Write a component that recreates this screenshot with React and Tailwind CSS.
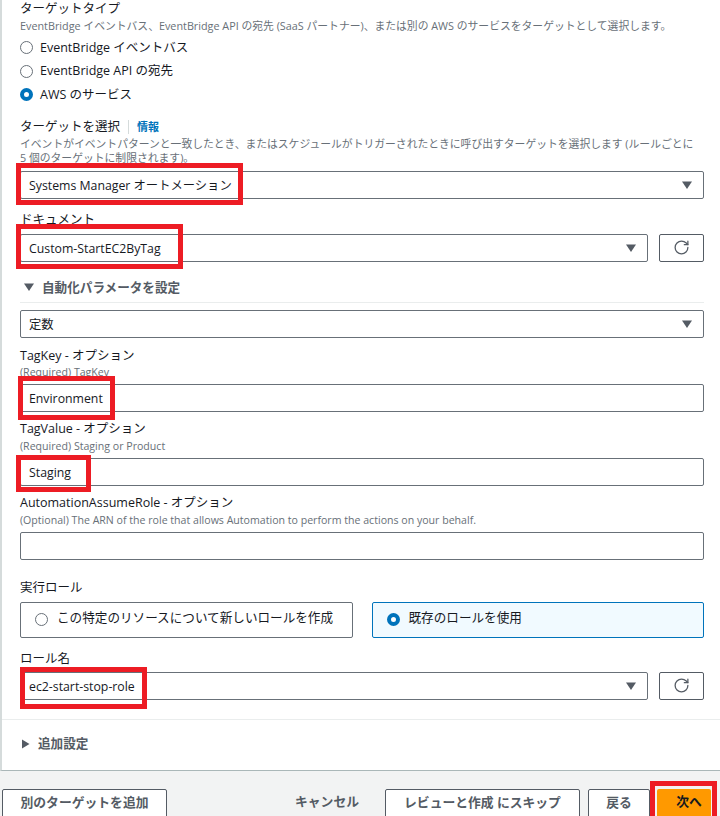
import React from "react";
import { RotateCw } from "lucide-react";

const font = "font-['Open_Sans','Noto_Sans_CJK_JP','Noto_Sans',sans-serif]";

function Caret({ dir = "down", cls = "" }) {
  return (
    <svg width="12" height="10" viewBox="0 0 12 10" className={cls}>
      {dir === "down" ? <path d="M1 1.5h10L6 9z" fill="#545b64" /> : <path d="M2 0.5v9L9.5 5z" fill="#545b64" />}
    </svg>
  );
}

function Radio({ checked }) {
  return checked ? (
    <span className="block w-[13px] h-[13px] shrink-0 rounded-full border-[4px] border-[#0073bb] bg-white" />
  ) : (
    <span className="block w-[13px] h-[13px] shrink-0 rounded-full border border-[#687078] bg-white" />
  );
}

function Label({ children, cls = "" }) {
  return <div className={`pt-[1px] leading-5 text-[12.5px] text-[#16191f] whitespace-nowrap ${cls}`}>{children}</div>;
}

function Desc({ children, cls = "text-[10.6px]" }) {
  return <div className={`h-4 leading-4 text-[#687078] whitespace-nowrap ${cls}`}>{children}</div>;
}

function Box({ children, caret = false, cls = "" }) {
  return (
    <div className={`h-7 flex-1 flex items-center justify-between pl-2 pr-[10px] border border-[#687078] rounded-[2px] bg-white text-[12.3px] text-[#16191f] ${cls}`}>
      <span className="pt-[3px]">{children}</span>
      {caret && <Caret />}
    </div>
  );
}

function Refresh() {
  return (
    <div className="w-[45px] h-7 ml-[11px] shrink-0 flex items-center justify-center border border-[#545b64] rounded-[2px] bg-white">
      <RotateCw size={17} strokeWidth={1.8} color="#545b64" />
    </div>
  );
}

function RadioRow({ checked, children }) {
  return (
    <div className="h-[23.5px] flex items-center gap-[7px] text-[12.5px] text-[#16191f] whitespace-nowrap">
      <Radio checked={checked} />
      <span className="pt-[1px]">{children}</span>
    </div>
  );
}

function Highlight({ cls }) {
  return <div className={`absolute border-[5px] border-[#ed1c24] ${cls}`} />;
}

export default function App() {
  return (
    <div className={`relative w-[720px] h-[816px] overflow-hidden bg-[#f2f3f3] ${font}`}>
      <div className="h-[771px] pl-[18px] pr-[16px] bg-white border-l-2 border-l-[#d5dbdb] border-b border-b-[#aab7b8] box-border">
        <Label cls="h-[18px] !leading-[16px]">ターゲットタイプ</Label>
        <Desc cls="text-[10.8px]">EventBridge イベントバス、EventBridge API の宛先 (SaaS パートナー)、または別の AWS のサービスをターゲットとして選択します。</Desc>
        <div className="mt-[2px]">
          <RadioRow>EventBridge イベントバス</RadioRow>
          <RadioRow>EventBridge API の宛先</RadioRow>
          <RadioRow checked>AWS のサービス</RadioRow>
        </div>

        <Label cls="mt-[10px] h-5 flex items-center">
          <span>ターゲットを選択</span>
          <span className="mx-2 h-[14px] w-px bg-[#d5dbdb]" />
          <span className="text-[11px] font-bold text-[#0073bb]">情報</span>
        </Label>
        <div className="text-[10.8px] leading-[14px] text-[#687078] whitespace-nowrap">
          イベントがイベントパターンと一致したとき、またはスケジュールがトリガーされたときに呼び出すターゲットを選択します (ルールごとに<br />5 個のターゲットに制限されます)。
        </div>
        <div className="mt-[6px] flex"><Box caret>Systems Manager オートメーション</Box></div>

        <Label cls="mt-[10px] h-5">ドキュメント</Label>
        <div className="mt-[5px] flex"><Box caret>Custom-StartEC2ByTag</Box><Refresh /></div>

        <div className="mt-[15px] h-5 flex items-center gap-[7px] pl-[3px] text-[12.6px] font-semibold text-[#545b64] whitespace-nowrap">
          <Caret />
          <span className="pt-[3px]">自動化パラメータを設定</span>
        </div>
        <div className="mt-[5px] h-px bg-[#eaeded]" />
        <div className="mt-[7px] flex"><Box caret>定数</Box></div>

        <Label cls="mt-[7px] h-5">TagKey - オプション</Label>
        <div className="-mt-[1px]"><Desc>(Required) TagKey</Desc></div>
        <div className="mt-[4px] flex"><Box>Environment</Box></div>

        <Label cls="mt-[6px] h-5">TagValue - オプション</Label>
        <Desc>(Required) Staging or Product</Desc>
        <div className="mt-[4px] flex"><Box>Staging</Box></div>

        <Label cls="mt-[6px] h-5">AutomationAssumeRole - オプション</Label>
        <Desc>(Optional) The ARN of the role that allows Automation to perform the actions on your behalf.</Desc>
        <div className="mt-[4px] flex"><Box /></div>

        <Label cls="mt-[17px] h-5">実行ロール</Label>
        <div className="mt-[5px] grid grid-cols-2 gap-[19px]">
          <div className="h-9 flex items-center gap-[9px] pl-[14px] border border-[#687078] rounded-[2px] text-[12.6px] text-[#16191f] whitespace-nowrap">
            <Radio /><span className="-mt-[2px]">この特定のリソースについて新しいロールを作成</span>
          </div>
          <div className="h-9 flex items-center gap-[9px] pl-[14px] border border-[#0073bb] rounded-[2px] bg-[#f1faff] text-[12.6px] text-[#16191f] whitespace-nowrap">
            <Radio checked /><span className="-mt-[2px]">既存のロールを使用</span>
          </div>
        </div>

        <Label cls="mt-[10px] h-5">ロール名</Label>
        <div className="mt-[4px] flex"><Box caret>ec2-start-stop-role</Box><Refresh /></div>
      </div>

      <div className="absolute left-[2px] right-0 top-[719px] h-px bg-[#eaeded]" />
      <div className="absolute left-[21px] top-[734px] h-5 flex items-center gap-[6px] text-[12.6px] font-semibold text-[#545b64] whitespace-nowrap">
        <Caret dir="right" cls="-ml-[1px]" />
        <span>追加設定</span>
      </div>

      <div className="mt-[18px] flex items-start pl-[2px] text-[12.8px] font-semibold text-[#545b64] whitespace-nowrap">
        <div className="w-[165px] h-9 flex justify-center pt-[3px] border border-[#545b64] rounded-[2px] bg-white">別のターゲットを追加</div>
        <div className="ml-[128px] pt-[3px]">キャンセル</div>
        <div className="ml-[26px] w-[195px] h-9 flex justify-center pt-[3px] border border-[#545b64] rounded-[2px] bg-white">レビューと作成 にスキップ</div>
        <div className="ml-[8px] w-[62px] h-9 flex justify-center pt-[3px] border border-[#545b64] rounded-[2px] bg-white">戻る</div>
        <div className="ml-[7px] w-[54px] h-9 flex justify-center pt-[3px] pl-[10px] rounded-[2px] bg-[#ff9900] text-[#16191f]">次へ</div>
      </div>

      <Highlight cls="left-[16px] top-[163px] w-[227px] h-[42px]" />
      <Highlight cls="left-[16px] top-[224px] w-[167px] h-[45px]" />
      <Highlight cls="left-[18px] top-[376px] w-[97px] h-[44px]" />
      <Highlight cls="left-[16px] top-[455px] w-[75px] h-[37px]" />
      <Highlight cls="left-[20px] top-[667px] w-[127px] h-[42px]" />
      <Highlight cls="left-[650px] top-[781px] w-[67px] h-[40px]" />
    </div>
  );
}
